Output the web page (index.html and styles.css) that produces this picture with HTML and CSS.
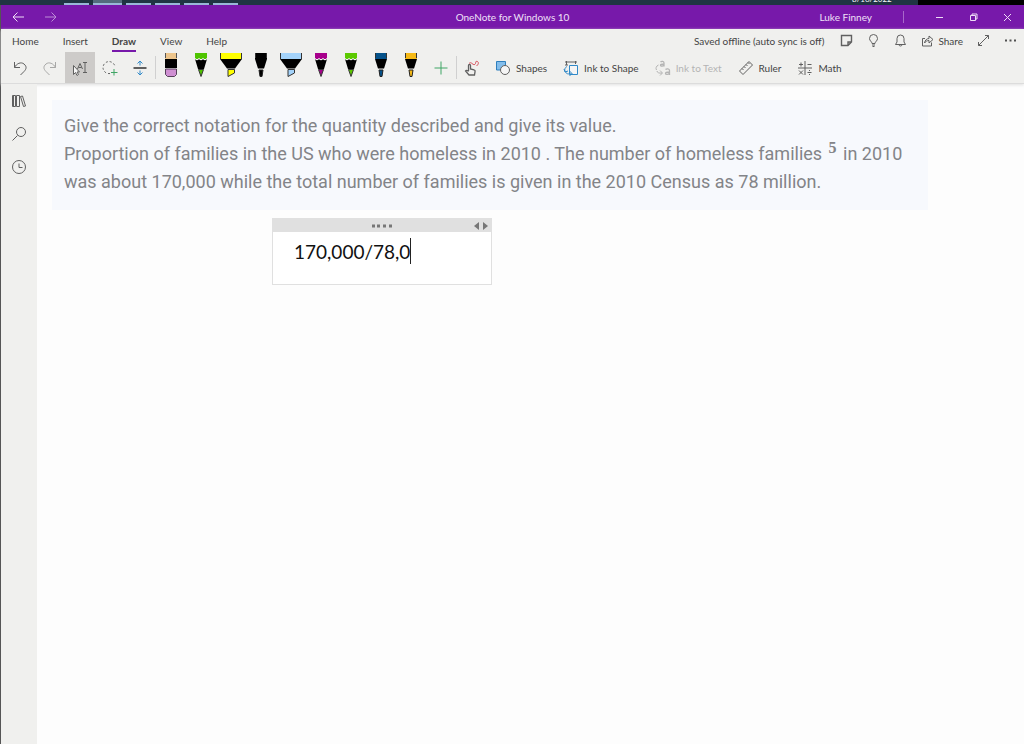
FILE: index.html
```html
<!DOCTYPE html>
<html lang="en">
<head>
    <meta charset="UTF-8">
    <meta name="viewport" content="width=device-width, initial-scale=1.0">
    <title>OneNote for Windows 10</title>
    <link rel="stylesheet" href="styles.css">
</head>
<body>
    <div class="taskbar">
        <div class="taskbar-apps">
            <span></span><span class="current"></span><span></span><span></span><span></span><span></span>
        </div>
        <div class="taskbar-date">8/16/2022</div>
        <div class="taskbar-end"></div>
    </div>
    <div class="app">
        <header class="titlebar">
            <div class="titlebar-side">
                <button aria-label="Back"><svg width="12" height="12" viewBox="0 0 12 12"><path d="M12 6H1M5.500 1.500L1 6l4.500 4.500"/></svg></button>
                <button class="faded" aria-label="Forward"><svg width="12" height="12" viewBox="0 0 12 12"><path d="M0 6h11M6.500 1.500L11 6l-4.500 4.500"/></svg></button>
            </div>
            <div class="title">OneNote for Windows 10</div>
            <div class="titlebar-side right">
                <span class="user">Luke Finney</span>
                <button aria-label="Minimize"><svg width="9" height="9" viewBox="0 0 9 9"><path d="M1 4.500h7"/></svg></button>
                <button aria-label="Restore"><svg width="9" height="9" viewBox="0 0 9 9"><path d="M1.500 2.500h5v5h-5zM3 2.500v-1.500h5v5H6.500"/></svg></button>
                <button aria-label="Close"><svg width="9" height="9" viewBox="0 0 9 9"><path d="M1 1l7 7M8 1l-7 7"/></svg></button>
            </div>
        </header>
        <div class="ribbon">
            <div class="tabs-row">
                <nav class="tabs">
                    <button>Home</button>
                    <button>Insert</button>
                    <button class="active">Draw</button>
                    <button>View</button>
                    <button>Help</button>
                </nav>
                <div class="page-actions">
                    <span class="sync">Saved offline (auto sync is off)</span>
                    <button aria-label="Feed"><svg width="13" height="13" viewBox="0 0 13 13"><path stroke-width="1.400" d="M1.500 1.500h10v6.500l-3.500 3.500h-6.500zM11.500 8H8v3.500"/></svg></button>
                    <button aria-label="Tips"><svg width="13" height="13" viewBox="0 0 13 13"><path d="M5 9.500C5 7.500 2.500 7 2.500 4.500a4 4 0 0 1 8 0C10.500 7 8 7.500 8 9.500zM5 11h3M5.500 12.500h2"/></svg></button>
                    <button aria-label="Notifications"><svg width="13" height="13" viewBox="0 0 13 13"><path d="M1.500 10.500h10L10 8V4.500a3.500 3.500 0 0 0-7 0V8zM5 10.500a1.500 1.500 0 0 0 3 0"/></svg></button>
                    <button class="share"><svg width="13" height="13" viewBox="0 0 13 13"><path d="M4 4.500H1.500v7.500h9V8.500M3.500 9C4 6 6 4.500 8 4.500V2l4 3.500L8 9V6.500C6 6.500 4.500 7.500 3.500 9z"/></svg>Share</button>
                    <button aria-label="Full screen"><svg width="13" height="13" viewBox="0 0 13 13"><path d="M1.500 11.500l10-10M8 1.500h3.500V5M1.500 8v3.500H5"/></svg></button>
                    <button aria-label="More"><svg width="13" height="13" viewBox="0 0 13 13"><path class="dots" d="M1 5.500h2v2H1zM5.500 5.500h2v2h-2zM10 5.500h2v2h-2z"/></svg></button>
                </div>
            </div>
            <div class="tools">
                <button class="tool" aria-label="Undo"><svg width="16" height="16" viewBox="0 0 16 16"><path d="M2.500 2v5.500H8M2.500 7.500C4.500 3.500 9 1.500 12 4s2.500 5 0 7.500L8.500 15"/></svg></button>
                <button class="tool disabled" aria-label="Redo"><svg width="16" height="16" viewBox="0 0 16 16"><path d="M13.500 2v5.500H8M13.500 7.500C11.500 3.500 7 1.500 4 4s-2.500 5 0 7.500L7.500 15"/></svg></button>
                <button class="tool selected" aria-label="Select objects or type text">
                    <svg width="16" height="16" viewBox="0 0 16 16"><path d="M11 2.500h4M11 12.500h4M13 2.500v10M5.500 9L8 3.500 10.500 9M6.500 7.500h3"/><path class="paper" d="M1.500 5.500v9l2-2 1.500 3 1.500-1-1.500-2.500h2.500z"/></svg>
                </button>
                <button class="tool" aria-label="Lasso select">
                    <svg width="16" height="16" viewBox="0 0 16 16"><path stroke-dasharray="2 2" d="M8 13.500A6 6 0 1 1 13 7"/><path class="green" d="M12 9v6.500M9 12.500h6.500"/></svg>
                </button>
                <button class="tool" aria-label="Insert or remove extra space">
                    <svg width="16" height="16" viewBox="0 0 16 16"><path stroke-width="2" d="M1.500 8h13"/><path class="blue" d="M8 1v4.500M5.500 3.500L8 1l2.500 2.500M8 10.500V15M5.500 12.500L8 15l2.500-2.500"/></svg>
                </button>
                <span class="divider"></span>
                <button class="pen" aria-label="Eraser">
                    <svg width="24" height="26" viewBox="0 0 24 26"><path fill="#edc58c" d="M6 1h12v6H6z"/><path fill="#000" d="M6 7h12v9H6z"/><path fill="#cf8fd2" stroke="#55405a" d="M6.500 17h11v5.500l-2 2h-7l-2-2z"/><path stroke="#555" d="M6.500 1v5M17.500 1v5"/></svg>
                </button>
                <button class="pen" style="--ink: #4fc400" aria-label="Pencil, green"><svg width="24" height="26"><use href="#pencil"/></svg></button>
                <button class="pen" style="--ink: #ffff00" aria-label="Highlighter, yellow"><svg width="24" height="26"><use href="#marker"/></svg></button>
                <button class="pen" style="--ink: #000000" aria-label="Pen, black"><svg width="24" height="26"><use href="#pen"/></svg></button>
                <button class="pen" style="--ink: #a4d3fa" aria-label="Highlighter, light blue"><svg width="24" height="26"><use href="#marker"/></svg></button>
                <button class="pen" style="--ink: #a7008b" aria-label="Pencil, magenta"><svg width="24" height="26"><use href="#pencil"/></svg></button>
                <button class="pen" style="--ink: #5cc900" aria-label="Pencil, lime"><svg width="24" height="26"><use href="#pencil"/></svg></button>
                <button class="pen" style="--ink: #06528a" aria-label="Pen, blue"><svg width="24" height="26"><use href="#pen"/></svg></button>
                <button class="pen" style="--ink: #f5b916" aria-label="Pen, gold"><svg width="24" height="26"><use href="#pen"/></svg></button>
                <button class="tool" aria-label="Add pen"><svg width="16" height="16" viewBox="0 0 16 16"><path class="green" d="M8 1.500v13M1.500 8h13"/></svg></button>
                <span class="divider"></span>
                <button class="tool" aria-label="Draw with mouse or touch">
                    <svg width="16" height="16" viewBox="0 0 16 16"><path stroke-width="1.300" d="M4.500 11V5.500c0-1.500 2-1.500 2 0V9l3.500.8c1 .2 1.200 1 1 2l-.5 3.200H5L1.500 11c.5-1 2-1 3 .5"/><path class="red" d="M8 3.500c1.500 1.500 3 1.500 3.500 0S11 1 13.500 1.500c1.500 1 1 3-1 4.500M5 3.500c1-1 2-1 3 0"/></svg>
                </button>
                <button class="command">
                    <svg width="16" height="16" viewBox="0 0 16 16"><path fill="#83bdeb" stroke="#2f7fbd" d="M1.500 1.500h9V5L5 10H1.500z"/><circle class="paper" cx="10" cy="10" r="4.500"/></svg>Shapes
                </button>
                <button class="command">
                    <svg width="16" height="16" viewBox="0 0 16 16"><path d="M2 2h12M3.500 1v4M12.500 1v3M2 5h3"/><path class="blue paper" d="M6.500 5.500h8v9h-8z"/><path class="blue" d="M4 6.500c-2 1-3 3-1.500 5.500s3 2 6 1.500M6.500 11L9 13.500 6.500 16M1 9l1 3 3-1"/></svg>Ink to Shape
                </button>
                <button class="command" disabled>
                    <svg width="16" height="16" viewBox="0 0 16 16"><path stroke-width="1.300" d="M5.500 2c1-1 3.500-1 3.500 1v3.500M9 4C6.500 4 5.500 4.300 5.500 5.300s2.500 1.200 3.500-.5M10.500 9.500c1-1 4-1 4 1v4.500M14.500 12c-3 0-4 .5-4 1.500s3 1.500 4-.5"/><path d="M3.500 5C1 6 .5 8.500 1.500 10M2 11c0 1.500 2 2.500 5 2M5 10.500L7.500 13 5 15.500"/></svg>Ink to Text
                </button>
                <button class="command">
                    <svg width="16" height="16" viewBox="0 0 16 16"><path d="M1.500 11L11 1.500 14.500 5 5 14.500zM4 8.500l1.500 1.500M6 6.500L7.500 8M8 4.500L9.500 6M10 2.500L11.500 4"/></svg>Ruler
                </button>
                <button class="command">
                    <svg width="16" height="16" viewBox="0 0 16 16"><path d="M8 1v14M1 8h14M2 4.500h4M4 2.500v4M10.500 4.500h4M2 10.500l4 4M6 10.500l-4 4M10.500 12.500h4M12 10.500h1M12 14.500h1"/></svg>Math
                </button>
            </div>
        </div>
        <div class="workspace">
            <aside class="sidebar">
                <button aria-label="Notebooks"><svg width="14" height="14" viewBox="0 0 14 14"><path d="M.5 1.500h3v11h-3zM4.500 1.500h3v11h-3zM8.500 2.500l2-.5 3 10-2 .5zM1.500 1.500v11"/></svg></button>
                <button aria-label="Search"><svg width="14" height="14" viewBox="0 0 14 14"><circle cx="9" cy="5" r="4.500"/><path d="M5.500 8.500l-5 5"/></svg></button>
                <button aria-label="Recent notes"><svg width="14" height="14" viewBox="0 0 14 14"><circle cx="7" cy="7" r="6.500"/><path d="M7 3.500V7.500h3.500"/></svg></button>
            </aside>
            <main class="page">
                <p class="question">
                    Give the correct notation for the quantity described and give its value.<br>
                    Proportion of families in the US who were homeless in 2010 . The number of homeless families <sup>5</sup> in 2010<br>
                    was about 170,000 while the total number of families is given in the 2010 Census as 78 million.
                </p>
                <div class="note">
                    <div class="note-handle">
                        <svg class="grip" width="22" height="4" viewBox="0 0 22 4"><path d="M1 .5h3v3H1zM6 .5h3v3H6zM12 .5h3v3h-3zM18 .5h3v3h-3z"/></svg>
                        <svg width="16" height="8" viewBox="0 0 16 8"><path d="M6 0v8L1 4zM10 0v8l5-4z"/></svg>
                    </div>
                    <div class="note-body">
                        <input type="text" value="170,000/78,0" aria-label="Note text"><span class="caret"></span>
                    </div>
                </div>
            </main>
        </div>
    </div>
    <svg class="symbols" width="0" height="0">
        <symbol id="pencil" viewBox="0 0 24 26">
            <path class="ink" d="M6 1h12v6H6z"/>
            <path fill="#000" d="M6 7l2 1 2-1 2 1 2-1 2 1 2-1-3 10H9z"/>
            <path stroke="#fff" fill="none" d="M6 6.500l2 1.500 2-1.500L12 8l2-1.500L16 8l2-1.500"/>
            <path class="ink" stroke="#333" d="M9.500 17.500h5L12 24.500z"/>
        </symbol>
        <symbol id="marker" viewBox="0 0 24 26">
            <path class="ink" d="M1 1h22v6H1z"/>
            <path stroke="#333" d="M1.500 1v6M22.500 1v6"/>
            <path fill="#000" d="M1 7h22l-7 9.500H8z"/>
            <path class="ink" stroke="#333" d="M9 17.500h6.500V21L9 24.500z"/>
        </symbol>
        <symbol id="pen" viewBox="0 0 24 26">
            <path class="ink" d="M6 1h12v6H6z"/>
            <path stroke="#333" d="M6.500 1v5M17.500 1v5"/>
            <path fill="#000" d="M6 7h12l-3 9.500H9z"/>
            <path class="ink" stroke="#222" d="M10 18h4l-1 6.500h-2z"/>
        </symbol>
    </svg>
</body>
</html>
```

FILE: styles.css
```css
* { box-sizing: border-box; }
body { margin: 0; min-height: 100vh; display: flex; flex-direction: column; font-family: Lato, "Open Sans", sans-serif; font-size: 10px; color: #444; background-color: #fdfdfd; }
button { display: flex; align-items: center; justify-content: center; margin: 0; padding: 0; border: none; background: none; font: inherit; color: inherit; cursor: pointer; }
svg { display: block; flex: none; fill: none; stroke: #606060; }

/* strip of the Windows taskbar above the window */
.taskbar { display: flex; height: 5px; overflow: hidden; background-color: #1f3543; }
.taskbar-apps { display: flex; gap: 4px; flex: 1; padding-left: 64px; }
.taskbar-apps span { width: 25px; border-bottom: 2px solid #99b8d8; }
.taskbar-apps .current { width: 29px; background-color: #536c7e; }
.taskbar-date { display: flex; align-items: flex-end; width: 66px; padding-bottom: 1px; color: #fff; font-size: 8px; line-height: 10px; }
.taskbar-end { width: 106px; background-color: #000; }

.app { flex: 1; display: flex; flex-direction: column; border-left: 1px solid #555; }
.titlebar { display: flex; align-items: center; height: 24px; color: #f0e0f8; background-color: #7719aa; }
.titlebar svg { stroke: #eedcf6; }
.titlebar-side { flex: 1; display: flex; align-items: center; }
.titlebar-side button { width: 33px; height: 24px; }
.titlebar .faded { opacity: 0.6; }
.titlebar .right { justify-content: flex-end; }
.right button { width: 34px; }
.user { margin-right: 18px; padding-right: 31px; line-height: 12px; border-right: 1px solid #a868ca; }

.ribbon { background-color: #f0f0ee; border-bottom: 1px solid #dcdcdc; box-shadow: 0 1px 3px #e0e0e0; }
.tabs-row { display: flex; justify-content: space-between; height: 23px; }
.tabs { display: flex; gap: 24px; padding-left: 11px; }
.tabs button { padding-top: 2px; border-bottom: 2px solid transparent; }
.tabs .active { font-weight: bold; border-color: #7719aa; }
.page-actions { display: flex; align-items: center; gap: 14px; padding-right: 7px; }
.sync { margin-right: 2px; }
.share { gap: 4px; }
.dots { fill: #505050; stroke: none; }

.tools { display: flex; height: 31px; padding-left: 4px; }
.tool, .pen { width: 30px; }
.tool.selected { background-color: #cdcbc9; }
.disabled { opacity: 0.5; }
.pen { align-items: flex-start; }
.pen svg { stroke: none; }
.ink { fill: var(--ink); }
.divider { width: 1px; margin: 4px 0; background-color: #d0d0d0; }
.command { gap: 5px; padding: 0 8px; }
.command:disabled { color: #b4b4b4; cursor: default; }
.command:disabled svg { stroke: #b4b4b4; }
.green { stroke: #3fa565; }
.blue { stroke: #3089c8; }
.red { stroke: #d8505c; }
.paper { fill: #f5f5f5; }

.workspace { flex: 1; display: flex; }
.sidebar { width: 36px; background-color: #f0f0ee; }
.sidebar button { width: 36px; height: 33px; }
.page { flex: 1; padding: 16px 96px 0 15px; }
.question { margin: 0; padding: 12px 0 14px 12px; font-family: Roboto, sans-serif; font-size: 18px; line-height: 28px; color: #838488; background-color: #f7f9fd; }
.question sup { margin: 0 2px; font-family: "Liberation Serif", serif; font-size: 16px; font-weight: bold; line-height: 0; }
.note { width: 220px; margin: 8px 0 0 220px; border: 1px solid #e0e0e0; }
.note-handle { display: flex; align-items: center; justify-content: flex-end; gap: 80px; height: 13px; padding-right: 2px; background-color: #e0e0e0; }
.note-handle svg { fill: #777; stroke: none; }
.note-body { display: flex; align-items: center; height: 52px; padding: 0 0 14px 21px; background-color: #fff; }
.note-body input { width: 116px; padding: 0; border: none; outline: none; font-family: Lato, sans-serif; font-size: 19px; color: #111; background: none; }
.caret { width: 1px; height: 26px; background-color: #222; }
.symbols { position: absolute; }
```
